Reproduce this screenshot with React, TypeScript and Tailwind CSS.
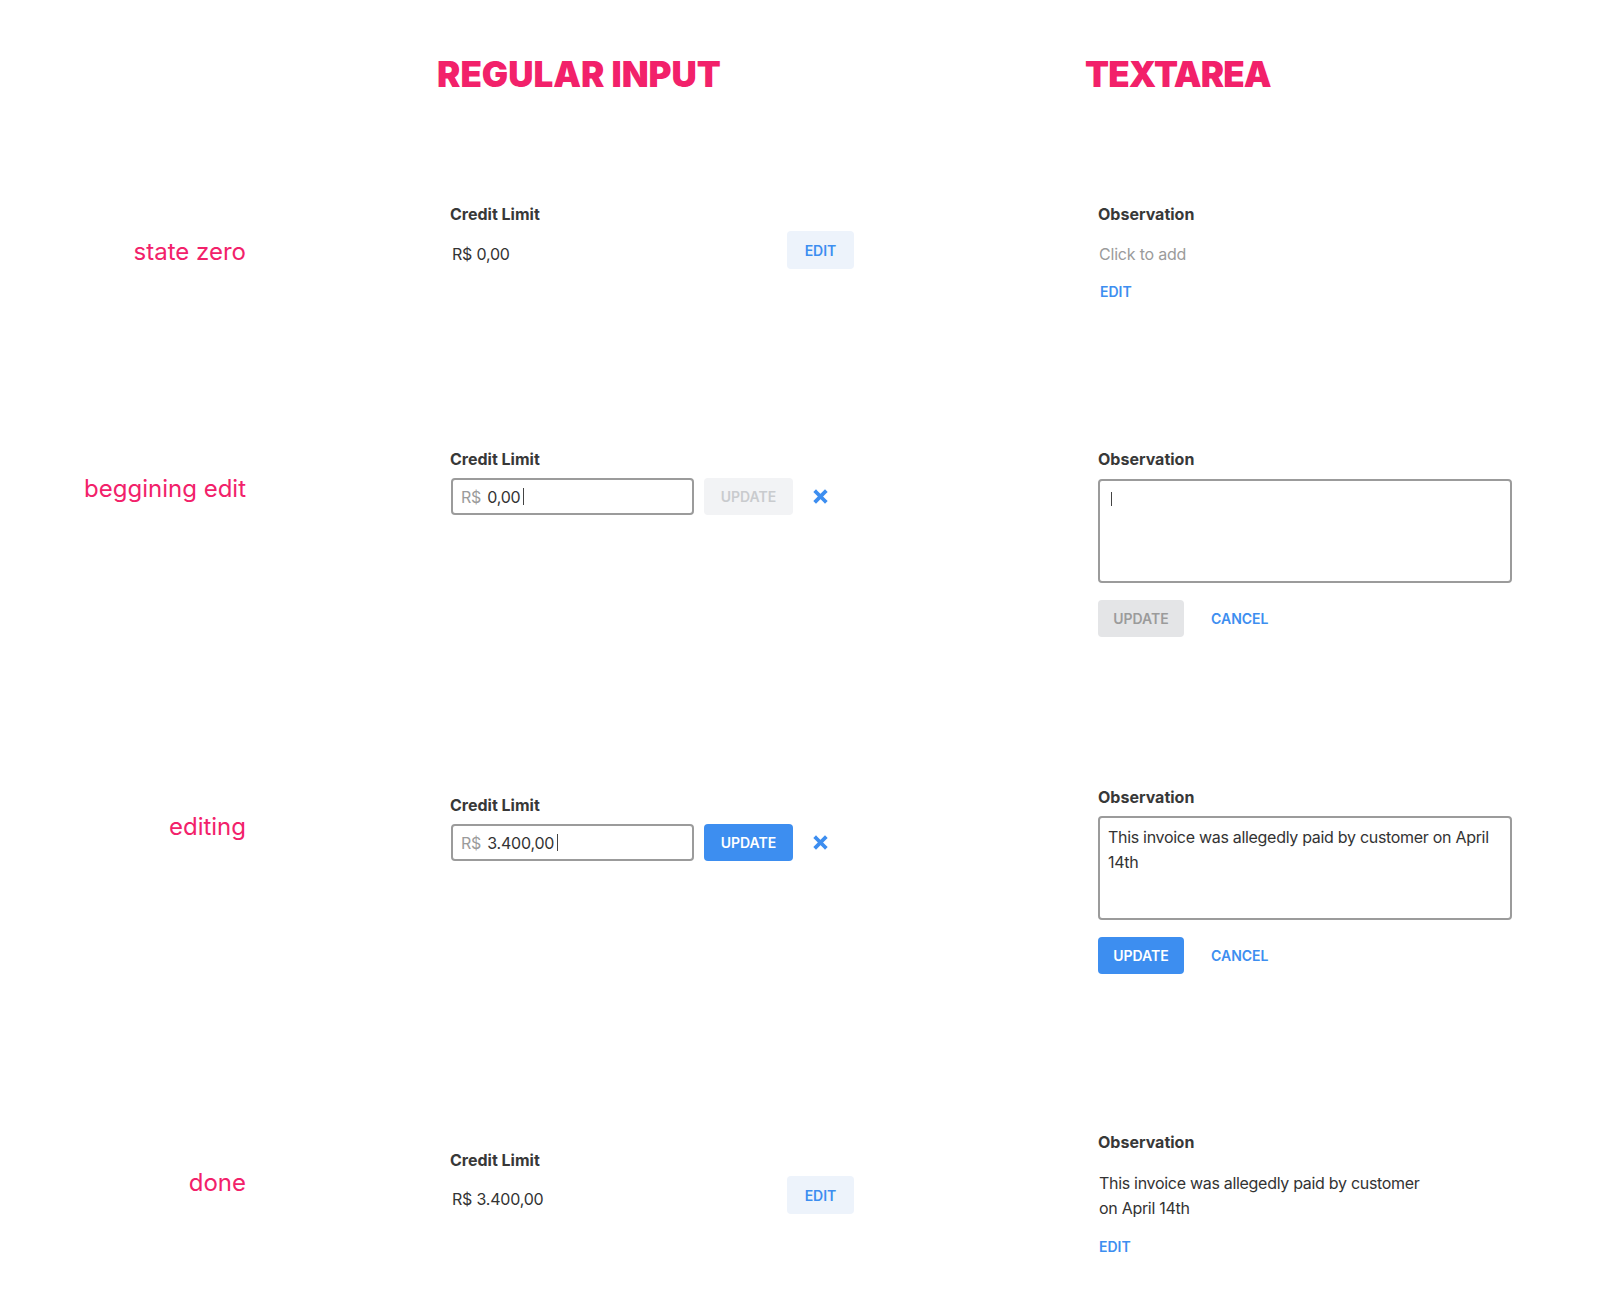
import * as React from 'react';

const PINK = 'text-[#f2216a]';

function StateLabel({ children, top }: { children: React.ReactNode; top: string }) {
  return (
    <div className={`pr-[191px] text-right text-[24px] leading-[32px] ${PINK} ${top}`}>{children}</div>
  );
}

function FieldLabel({ children }: { children: React.ReactNode }) {
  return <div className="text-[16px] font-bold leading-[20px] text-[#383838]">{children}</div>;
}

function EditButton() {
  return (
    <button
      type="button"
      className="flex h-[38px] w-[67px] items-center justify-center rounded-[4px] bg-[#edf3fb] text-[14px] font-semibold text-[#3d8ef0]"
    >
      EDIT
    </button>
  );
}

function Caret({ className = '' }: { className?: string }) {
  return <span className={`inline-block w-px bg-[#444] align-middle ${className}`} />;
}

function CloseIcon() {
  return (
    <svg width="15" height="15" viewBox="0 0 15 15" aria-hidden>
      <path d="M3 3l9 9M12 3l-9 9" stroke="#3d8ef0" strokeWidth="3.8" strokeLinecap="square" />
    </svg>
  );
}

function MoneyInput({ value, active }: { value: string; active: boolean }) {
  return (
    <div className="flex items-center">
      <div className="flex h-[37px] w-[243px] items-center rounded-[4px] border-2 border-[#9b9b9b] pl-[8px] text-[16px] tracking-[-0.2px]">
        <span className="text-[#9b9b9b]">R$</span>
        <span className="ml-[6px] text-[#333]">{value}</span>
        <Caret className="ml-[3px] h-[17px]" />
      </div>
      <button
        type="button"
        className={`ml-[10px] flex h-[37px] w-[89px] items-center justify-center rounded-[4px] text-[14px] font-semibold ${
          active ? 'bg-[#3d8ef0] text-white' : 'bg-[#f2f3f5] text-[#c9cbce]'
        }`}
      >
        UPDATE
      </button>
      <span className="ml-[20px] flex">
        <CloseIcon />
      </span>
    </div>
  );
}

function TextBox({ children }: { children?: React.ReactNode }) {
  return (
    <div className="h-[104px] w-[414px] rounded-[4px] border-2 border-[#9b9b9b] px-[8px] pt-[7px] text-[16px] leading-[25px] tracking-[-0.3px] text-[#333]">
      {children}
    </div>
  );
}

function TextActions({ active }: { active: boolean }) {
  return (
    <div className="mt-[17px] flex items-center">
      <button
        type="button"
        className={`flex h-[37px] w-[86px] items-center justify-center rounded-[4px] text-[14px] font-semibold ${
          active ? 'bg-[#3d8ef0] text-white' : 'bg-[#e4e5e7] text-[#9b9b9b]'
        }`}
      >
        UPDATE
      </button>
      <button type="button" className="ml-[27px] text-[14px] font-semibold text-[#3d8ef0]">
        CANCEL
      </button>
    </div>
  );
}

export default function App() {
  return (
    <div
      className="min-h-[1308px] w-full bg-white pt-[54px] text-[#333]"
      style={{ fontFamily: 'Inter, "Liberation Sans", sans-serif' }}
    >
      {/* headings */}
      <div className="grid grid-cols-[437px_648px_1fr]">
        <div />
        <h1 className={`text-[35px] font-black leading-[40px] ${PINK}`}>REGULAR INPUT</h1>
        <h1 className={`text-[35px] font-black leading-[40px] tracking-[-0.9px] ${PINK}`}>TEXTAREA</h1>
      </div>

      {/* state zero */}
      <div className="mt-[110px] grid grid-cols-[437px_648px_1fr]">
        <StateLabel top="mt-[32px]">state zero</StateLabel>
        <div className="pl-[13px]">
          <div className="w-[404px]">
            <FieldLabel>Credit Limit</FieldLabel>
            <div className="mt-[7px] flex items-start justify-between">
              <span className="mt-[11px] pl-[2px] text-[16px] leading-[24px] tracking-[-0.2px] text-[#333]">R$ 0,00</span>
              <EditButton />
            </div>
          </div>
        </div>
        <div className="pl-[13px]">
          <FieldLabel>Observation</FieldLabel>
          <div className="mt-[18px] pl-[1px] text-[16px] leading-[24px] tracking-[-0.2px] text-[#9b9b9b]">Click to add</div>
          <button type="button" className="mt-[16px] block pl-[2px] text-[14px] font-semibold leading-[20px] text-[#3d8ef0]">
            EDIT
          </button>
        </div>
      </div>

      {/* beggining edit */}
      <div className="mt-[147px] grid grid-cols-[437px_648px_1fr]">
        <StateLabel top="mt-[24px]">beggining edit</StateLabel>
        <div className="pl-[13px]">
          <FieldLabel>Credit Limit</FieldLabel>
          <div className="mt-[9px] pl-[1px]">
            <MoneyInput value="0,00" active={false} />
          </div>
        </div>
        <div className="pl-[13px]">
          <FieldLabel>Observation</FieldLabel>
          <div className="mt-[10px]">
            <TextBox>
              <Caret className="ml-[3px] mt-[4px] h-[14px] align-top" />
            </TextBox>
          </div>
          <TextActions active={false} />
        </div>
      </div>

      {/* editing */}
      <div className="mt-[150px] grid grid-cols-[437px_648px_1fr]">
        <StateLabel top="mt-[24px]">editing</StateLabel>
        <div className="mt-[8px] pl-[13px]">
          <FieldLabel>Credit Limit</FieldLabel>
          <div className="mt-[9px] pl-[1px]">
            <MoneyInput value="3.400,00" active />
          </div>
        </div>
        <div className="pl-[13px]">
          <FieldLabel>Observation</FieldLabel>
          <div className="mt-[9px]">
            <TextBox>
              <span className="whitespace-nowrap">This invoice was allegedly paid by customer on April</span>
              <br />
              14th
            </TextBox>
          </div>
          <TextActions active />
        </div>
      </div>

      {/* done */}
      <div className="mt-[158px] grid grid-cols-[437px_648px_1fr]">
        <StateLabel top="mt-[35px]">done</StateLabel>
        <div className="mt-[18px] pl-[13px]">
          <div className="w-[404px]">
            <FieldLabel>Credit Limit</FieldLabel>
            <div className="mt-[6px] flex items-start justify-between">
              <span className="mt-[11px] pl-[2px] text-[16px] leading-[24px] tracking-[-0.2px] text-[#333]">R$ 3.400,00</span>
              <EditButton />
            </div>
          </div>
        </div>
        <div className="pl-[13px]">
          <FieldLabel>Observation</FieldLabel>
          <div className="mt-[19px] pl-[1px] text-[16px] leading-[25px] tracking-[-0.3px] text-[#333]">
            This invoice was allegedly paid by customer
            <br />
            on April 14th
          </div>
          <button type="button" className="mt-[16px] block pl-[1px] text-[14px] font-semibold leading-[20px] text-[#3d8ef0]">
            EDIT
          </button>
        </div>
      </div>
    </div>
  );
}
